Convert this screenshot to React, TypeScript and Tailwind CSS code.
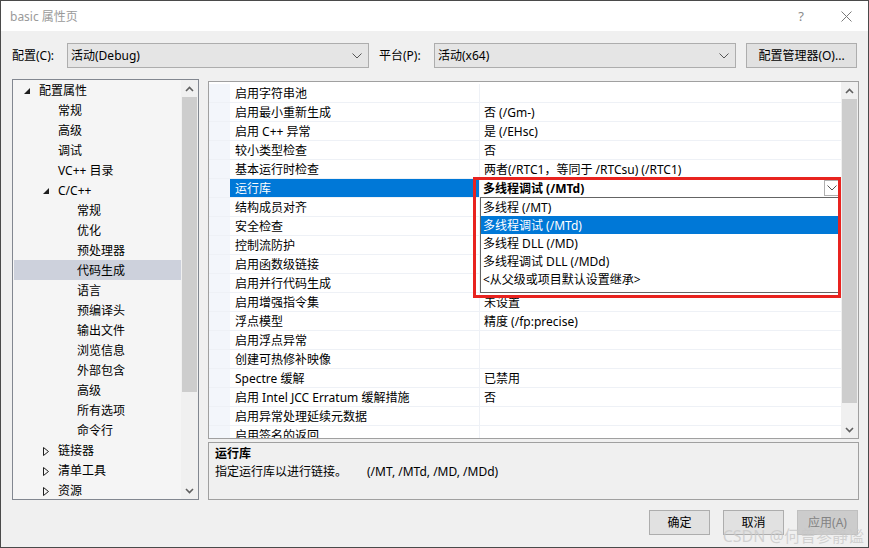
import React from "react";

const Chevron = ({ dir, className = "" }: { dir: "up" | "down"; className?: string }) => (
  <svg width="9" height="6" viewBox="0 0 9 6" className={className}>
    {dir === "up" ? (
      <path d="M1 5 L4.5 1.5 L8 5" fill="none" stroke="#606060" strokeWidth="1.6" />
    ) : (
      <path d="M1 1 L4.5 4.5 L8 1" fill="none" stroke="#606060" strokeWidth="1.6" />
    )}
  </svg>
);

const SelChevron = () => (
  <svg width="10" height="6" viewBox="0 0 10 6">
    <path d="M0.5 0.5 L5 5 L9.5 0.5" fill="none" stroke="#555" strokeWidth="1" />
  </svg>
);

const ScrollV = ({ thumb, rest }: { thumb: string; rest: string }) => (
  <div className="flex w-[17px] shrink-0 flex-col bg-[#f0f0f0]">
    <div className="flex h-[17px] items-center justify-center">
      <Chevron dir="up" />
    </div>
    <div className={`mx-[1px] bg-[#cdcdcd] ${thumb}`} />
    <div className={rest} />
    <div className="flex h-[17px] items-center justify-center">
      <Chevron dir="down" />
    </div>
  </div>
);

type TreeItem = { t: string; lvl: 0 | 1 | 2; exp?: "open" | "closed"; sel?: boolean };

const tree: TreeItem[] = [
  { t: "配置属性", lvl: 0, exp: "open" },
  { t: "常规", lvl: 1 },
  { t: "高级", lvl: 1 },
  { t: "调试", lvl: 1 },
  { t: "VC++ 目录", lvl: 1 },
  { t: "C/C++", lvl: 1, exp: "open" },
  { t: "常规", lvl: 2 },
  { t: "优化", lvl: 2 },
  { t: "预处理器", lvl: 2 },
  { t: "代码生成", lvl: 2, sel: true },
  { t: "语言", lvl: 2 },
  { t: "预编译头", lvl: 2 },
  { t: "输出文件", lvl: 2 },
  { t: "浏览信息", lvl: 2 },
  { t: "外部包含", lvl: 2 },
  { t: "高级", lvl: 2 },
  { t: "所有选项", lvl: 2 },
  { t: "命令行", lvl: 2 },
  { t: "链接器", lvl: 1, exp: "closed" },
  { t: "清单工具", lvl: 1, exp: "closed" },
  { t: "资源", lvl: 1, exp: "closed" },
];

const spacer = ["w-[10px]", "w-[29px]", "w-[48px]"];

const TreeTri = ({ exp }: { exp?: "open" | "closed" }) => (
  <span className="flex w-[15px] shrink-0 items-center">
    {exp === "open" && (
      <svg width="6" height="6" viewBox="0 0 6 6">
        <path d="M6 0 L6 6 L0 6 Z" fill="#1e1e1e" />
      </svg>
    )}
    {exp === "closed" && (
      <svg width="6" height="9" viewBox="0 0 6 9">
        <path d="M0.5 0.5 L5.5 4.5 L0.5 8.5 Z" fill="none" stroke="#1e1e1e" strokeWidth="1" />
      </svg>
    )}
  </span>
);

const names = [
  "启用字符串池",
  "启用最小重新生成",
  "启用 C++ 异常",
  "较小类型检查",
  "基本运行时检查",
  "运行库",
  "结构成员对齐",
  "安全检查",
  "控制流防护",
  "启用函数级链接",
  "启用并行代码生成",
  "启用增强指令集",
  "浮点模型",
  "启用浮点异常",
  "创建可热修补映像",
  "Spectre 缓解",
  "启用 Intel JCC Erratum 缓解措施",
  "启用异常处理延续元数据",
  "启用签名的返回",
];

const values = [
  "",
  "否 (/Gm-)",
  "是 (/EHsc)",
  "否",
  "两者(/RTC1，等同于 /RTCsu) (/RTC1)",
  "",
  "",
  "",
  "",
  "",
  "",
  "未设置",
  "精度 (/fp:precise)",
  "",
  "",
  "已禁用",
  "否",
  "",
  "",
];

const options = ["多线程 (/MT)", "多线程调试 (/MTd)", "多线程 DLL (/MD)", "多线程调试 DLL (/MDd)", "<从父级或项目默认设置继承>"];

export default function App() {
  return (
    <div className="relative flex h-[548px] w-[869px] flex-col overflow-hidden border border-[#4a4a4a] bg-[#f0f0f0] font-['Noto_Sans','Noto_Sans_CJK_SC',sans-serif] text-[12px] leading-none text-black">
      {/* title bar */}
      <div className="flex h-[30px] shrink-0 items-center bg-white pl-[9px] pr-[16px] pt-[1px]">
        <span className="text-[12px] text-[#9a9a9a]">basic 属性页</span>
        <span className="ml-auto mr-[37px] text-[13px] text-[#8a8a8a]">?</span>
        <svg width="11" height="11" viewBox="0 0 11 11">
          <path d="M0.5 0.5 L10.5 10.5 M10.5 0.5 L0.5 10.5" stroke="#7a7a7a" strokeWidth="1" />
        </svg>
      </div>

      {/* config row */}
      <div className="mt-[12px] flex h-[25px] shrink-0 items-center pl-[11px]">
        <span className="w-[55px]">配置(C):</span>
        <div className="flex h-[25px] w-[302px] items-center border border-[#adadad] bg-[#e5e5e5] pl-[3px] pr-[6px]">
          <span>活动(Debug)</span>
          <span className="ml-auto">
            <SelChevron />
          </span>
        </div>
        <span className="ml-[10px] w-[55px]">平台(P):</span>
        <div className="flex h-[25px] w-[302px] items-center border border-[#adadad] bg-[#e5e5e5] pl-[3px] pr-[6px]">
          <span>活动(x64)</span>
          <span className="ml-auto">
            <SelChevron />
          </span>
        </div>
        <div className="ml-[10px] flex h-[25px] w-[111px] items-center justify-center border border-[#adadad] bg-[#e1e1e1]">
          配置管理器(O)...
        </div>
      </div>

      {/* main */}
      <div className="mt-[11px] flex shrink-0 pl-[11px]">
        {/* tree */}
        <div className="flex h-[421px] w-[187px] border border-[#828790] bg-[#f5f5f5]">
          <div className="flex flex-1 flex-col pl-[1px]">
            {tree.map((it, i) => (
              <div key={i} className={`flex h-[20px] shrink-0 items-center pt-[2px] ${it.sel ? "bg-[#cdd1dc]" : ""}`}>
                <span className={`shrink-0 ${spacer[it.lvl]}`} />
                <TreeTri exp={it.exp} />
                <span className="whitespace-nowrap">{it.t}</span>
              </div>
            ))}
          </div>
          <ScrollV thumb="h-[295px]" rest="flex-1" />
        </div>

        {/* right column */}
        <div className="ml-[9px] flex w-[651px] flex-col">
          <div className="relative mt-[2px] flex h-[358px] border border-[#a0a0a0] bg-white">
            <div className="flex flex-1 flex-col overflow-hidden pt-[2px]">
              {names.map((n, i) => {
                const sel = i === 5;
                return (
                  <div key={i} className="flex h-[19px] shrink-0 border-b border-[#eef1f6]">
                    <div className="w-[21px] shrink-0 bg-[#f3f6fb]" />
                    <div
                      className={`flex w-[250px] shrink-0 items-center whitespace-nowrap border-r border-[#eef1f6] pl-[5px] pt-[1px] ${
                        sel ? "bg-[#0078d7] text-white" : ""
                      }`}
                    >
                      {n}
                    </div>
                    {sel ? (
                      <div className="flex flex-1 items-center bg-white pl-[3px] pr-[1px]">
                        <span className="pt-[1px] font-bold">多线程调试 (/MTd)</span>
                        <span className="ml-auto flex h-[16px] w-[16px] items-center justify-center border border-[#b0b0b0] bg-white">
                          <SelChevron />
                        </span>
                      </div>
                    ) : (
                      <div className="flex flex-1 items-center whitespace-nowrap pl-[4px] pt-[1px]">{values[i]}</div>
                    )}
                  </div>
                );
              })}
            </div>
            <ScrollV thumb="h-[304px]" rest="flex-1" />

            {/* dropdown list */}
            <div className="absolute left-[271px] top-[115px] flex h-[96px] w-[360px] flex-col border border-[#646464] bg-white">
              {options.map((o, i) => (
                <div
                  key={i}
                  className={`flex h-[18px] shrink-0 items-center whitespace-nowrap pl-[2px] pt-[2px] ${
                    i === 1 ? "bg-[#0078d7] text-white" : ""
                  }`}
                >
                  {o}
                </div>
              ))}
            </div>

            {/* red annotation */}
            <div className="pointer-events-none absolute left-[264px] top-[95px] h-[121px] w-[368px] border-[3px] border-[#e8231f]" />
          </div>

          {/* description */}
          <div className="mt-[3px] flex h-[58px] flex-col border border-[#a0a0a0] bg-[#f0f0f0] pl-[6px] pt-[2px]">
            <div className="flex h-[18px] items-center font-bold">运行库</div>
            <div className="flex h-[18px] items-center whitespace-nowrap">
              <span>指定运行库以进行链接。</span>
              <span className="ml-[20px]">(/MT, /MTd, /MD, /MDd)</span>
            </div>
          </div>
        </div>
      </div>

      {/* buttons */}
      <div className="mt-[10px] flex h-[25px] shrink-0 justify-end gap-[13px] pr-[10px]">
        <div className="flex w-[61px] items-center justify-center border border-[#adadad] bg-[#e1e1e1]">确定</div>
        <div className="flex w-[61px] items-center justify-center border border-[#adadad] bg-[#e1e1e1]">取消</div>
        <div className="flex w-[61px] items-center justify-center border border-[#bfbfbf] bg-[#cccccc] text-[#838383]">应用(A)</div>
      </div>

      {/* watermark */}
      <div className="pointer-events-none absolute bottom-[3px] right-[4px] whitespace-nowrap text-[16px] text-[#c8c8c8]/80">
        CSDN @何曾参静谧
      </div>
    </div>
  );
}
